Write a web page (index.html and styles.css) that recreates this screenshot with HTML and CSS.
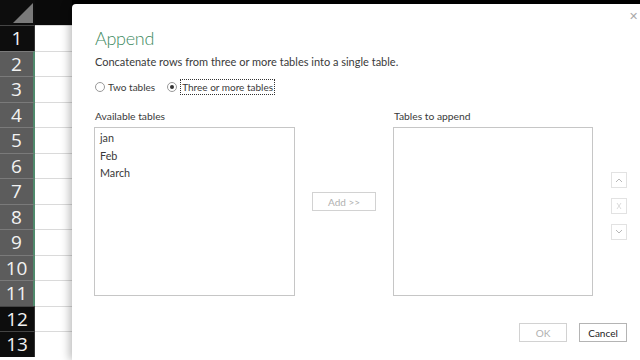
FILE: index.html
```html
<!DOCTYPE html>
<html lang="en">
<head>
  <meta charset="UTF-8">
  <title>Append</title>
  <link rel="stylesheet" href="styles.css">
</head>
<body>
  <div class="sheet">
    <div class="sheet-row head">
      <div class="rh corner"><span class="tri"></span></div>
      <div class="cell"></div>
    </div>
    <div class="sheet-row"><div class="rh">1</div><div class="cell"></div></div>
    <div class="sheet-row"><div class="rh sel">2</div><div class="cell"></div></div>
    <div class="sheet-row"><div class="rh sel">3</div><div class="cell"></div></div>
    <div class="sheet-row"><div class="rh sel">4</div><div class="cell"></div></div>
    <div class="sheet-row"><div class="rh sel">5</div><div class="cell"></div></div>
    <div class="sheet-row"><div class="rh sel">6</div><div class="cell"></div></div>
    <div class="sheet-row"><div class="rh sel">7</div><div class="cell"></div></div>
    <div class="sheet-row"><div class="rh sel">8</div><div class="cell"></div></div>
    <div class="sheet-row"><div class="rh sel">9</div><div class="cell"></div></div>
    <div class="sheet-row"><div class="rh sel">10</div><div class="cell"></div></div>
    <div class="sheet-row"><div class="rh sel">11</div><div class="cell"></div></div>
    <div class="sheet-row"><div class="rh">12</div><div class="cell"></div></div>
    <div class="sheet-row"><div class="rh">13</div><div class="cell"></div></div>
  </div>

  <div class="dialog">
    <span class="close">✕</span>
    <h1 class="title">Append</h1>
    <p class="desc">Concatenate rows from three or more tables into a single table.</p>
    <div class="radios">
      <label class="radio"><span class="dot"></span>Two tables</label>
      <label class="radio on"><span class="dot"></span><span class="focus">Three or more tables</span></label>
    </div>

    <div class="pick">
      <div class="col">
        <div class="lbl">Available tables</div>
        <ul class="list">
          <li>jan</li>
          <li>Feb</li>
          <li>March</li>
        </ul>
      </div>
      <div class="mid">
        <button class="btn add">Add &gt;&gt;</button>
      </div>
      <div class="col">
        <div class="lbl">Tables to append</div>
        <ul class="list"></ul>
      </div>
      <div class="side">
        <button class="sq">
          <svg width="8" height="6" viewBox="0 0 8 6"><path d="M1 5 L4 2 L7 5" fill="none" stroke="#b8b8b8" stroke-width="1"/></svg>
        </button>
        <button class="sq">
          <svg width="8" height="8" viewBox="0 0 8 8"><path d="M2 1 L6 7 M6 1 L2 7" fill="none" stroke="#dcdcdc" stroke-width="1"/></svg>
        </button>
        <button class="sq">
          <svg width="8" height="6" viewBox="0 0 8 6"><path d="M1 1 L4 4 L7 1" fill="none" stroke="#b8b8b8" stroke-width="1"/></svg>
        </button>
      </div>
    </div>

    <div class="footer">
      <button class="btn ok">OK</button>
      <button class="btn cancel">Cancel</button>
    </div>
  </div>
</body>
</html>
```

FILE: styles.css
```css
body {
  margin: 0;
  width: 640px;
  height: 360px;
  overflow: hidden;
  display: flex;
  background: #000;
  font-family: 'Segoe UI', Lato, sans-serif;
}
.sheet {
  width: 72px;
  flex: none;
  background: #fff;
  font-family: 'Open Sans', sans-serif;
}
.sheet-row {
  display: flex;
  height: 25.5px;
}
.sheet-row.head {
  height: 25px;
  background: #0a0a0a;
}
.rh {
  width: 35px;
  box-sizing: border-box;
  background: #0d0d0d;
  color: #f2f2f2;
  font-size: 19px;
  line-height: 25px;
  text-align: center;
  border-top: 1px solid #444;
  border-right: 1px solid #333;
}
.rh.sel {
  background: #5c5c5c;
  border-top: 1px solid #7a7a7a;
  border-right: 2px solid #4f8a6c;
}
.corner {
  border: none;
  position: relative;
}
.tri {
  position: absolute;
  right: 2px;
  bottom: 2px;
  width: 0;
  height: 0;
  border-left: 20px solid transparent;
  border-bottom: 20px solid #7a7a7a;
}
.cell {
  flex: 1;
  border-top: 1px solid #dadada;
  background: #fff;
}
.head .cell {
  background: #0a0a0a;
  border: none;
}
.dialog {
  position: relative;
  flex: 1;
  margin-top: 4px;
  background: #fff;
  border-top-left-radius: 4px;
  box-shadow: -3px 0 8px rgba(0,0,0,0.25);
  padding-left: 22px;
  color: #3a3a3a;
}
.close {
  position: absolute;
  top: 5px;
  right: 2px;
  font-size: 11px;
  color: #aaa;
}
.title {
  margin: 20px 0 0 1px;
  font-size: 18px;
  font-weight: 300;
  line-height: 28px;
  letter-spacing: -0.3px;
  color: #3d8a5f;
}
.desc {
  margin: 2px 0 0 1px;
  font-size: 11px;
  line-height: 16px;
}
.radios {
  display: flex;
  gap: 12px;
  margin: 9px 0 0 1px;
  font-size: 10px;
  line-height: 16px;
}
.radio {
  display: flex;
  align-items: center;
  gap: 3px;
}
.dot {
  width: 8px;
  height: 8px;
  border: 1px solid #999;
  border-radius: 50%;
  box-sizing: content-box;
  position: relative;
}
.radio.on .dot::after {
  content: "";
  position: absolute;
  left: 2px;
  top: 2px;
  width: 4px;
  height: 4px;
  border-radius: 50%;
  background: #333;
}
.focus {
  border: 1px dotted #333;
  padding: 0 1px;
  line-height: 14px;
}
.pick {
  display: flex;
  margin-top: 13px;
}
.col {
  width: 201px;
}
.col + .mid + .col {
  width: 200px;
}
.lbl {
  font-size: 10.3px;
  line-height: 16px;
  margin: 0 0 3px 1px;
}
.list {
  list-style: none;
  margin: 0;
  padding: 1px 0 0 5px;
  height: 169px;
  box-sizing: border-box;
  border: 1px solid #c6c6c6;
  font-size: 10.8px;
}
.list li {
  line-height: 17.5px;
}
.mid {
  width: 98px;
  display: flex;
  justify-content: center;
  padding-top: 84px;
}
.btn {
  font-family: inherit;
  background: #fff;
  border: 1px solid #d2d2d2;
  font-size: 10px;
  color: #b0b0b0;
  height: 19px;
  padding: 0;
}
.add {
  width: 64px;
}
.side {
  display: flex;
  flex-direction: column;
  gap: 10px;
  margin-left: 18px;
  padding-top: 64px;
}
.sq {
  width: 16px;
  height: 16px;
  padding: 0;
  background: #fff;
  border: 1px solid #e2e2e2;
  display: flex;
  align-items: center;
  justify-content: center;
}
.footer {
  display: flex;
  justify-content: flex-end;
  gap: 12px;
  margin-top: 27px;
  padding-right: 13px;
}
.ok {
  width: 48px;
}
.cancel {
  width: 48px;
  color: #222;
  border-color: #b4b4b4;
}
```
